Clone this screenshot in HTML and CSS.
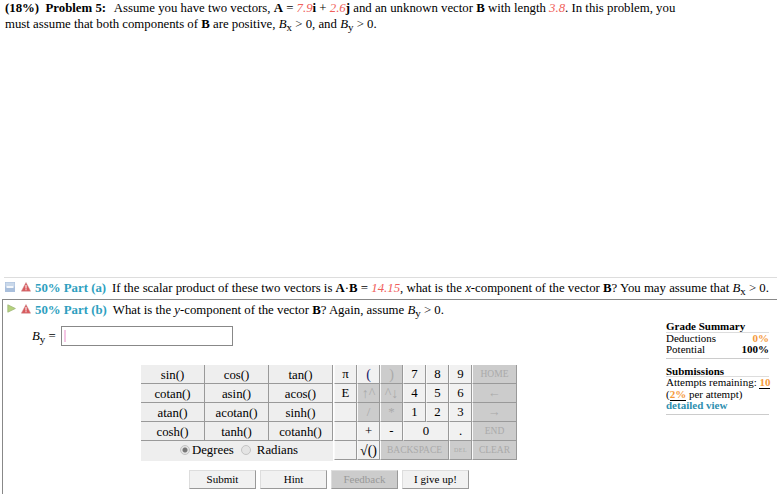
FILE: index.html
```html
<!DOCTYPE html>
<html lang="en">
<head>
<meta charset="utf-8">
<title>Problem 5</title>
<link rel="stylesheet" href="styles.css">
</head>
<body>
<div class="problem">
  <b>(18%)&nbsp; Problem 5:</b><span class="gap">&nbsp; Assume</span> you have two vectors, <b>A</b> = <i class="val">7.9</i><b>i</b> + <i class="val">2.6</i><b>j</b> and an unknown vector <b>B</b> with length <i class="val">3.8</i>. In this problem, you<br>
  must assume that both components of <b>B</b> are positive, <i>B</i><sub>x</sub> &gt; 0, and <i>B</i><sub>y</sub> &gt; 0.
</div>
<div class="part-a">
  <svg class="ic-min" viewBox="0 0 10 10"><rect width="10" height="10" fill="#a9bfdc"/><rect x="0.5" y="0.5" width="9" height="4" fill="#c9d8ea"/><rect x="1.5" y="4" width="7" height="2" fill="#f4f7fb"/></svg>
  <svg class="ic-warn" viewBox="0 0 10 10"><path d="M5 .5 9.6 9.2H.4Z" fill="#d9585c" stroke="#c98a8c" stroke-width=".5"/><rect x="4.5" y="3" width="1" height="3.6" fill="#fff"/><rect x="4.5" y="7.2" width="1" height="1" fill="#fff"/></svg>
  <span class="head">50% Part (a)</span>
  <span class="q">If the scalar product of these two vectors is <b>A</b>·<b>B</b> = <i class="val">14.15</i>, what is the <i>x</i>-component of the vector <b>B</b>? You may assume that <i>B</i><sub>x</sub> &gt; 0.</span>
</div>
<div class="part-b">
  <div class="part-title">
    <svg class="ic-play" viewBox="0 0 9 9"><path d="M.8.8 8.4 4.5.8 8.2Z" fill="#b5d27c" stroke="#9fb77a" stroke-width=".8"/></svg>
    <svg class="ic-warn" viewBox="0 0 10 10"><path d="M5 .5 9.6 9.2H.4Z" fill="#d9585c" stroke="#c98a8c" stroke-width=".5"/><rect x="4.5" y="3" width="1" height="3.6" fill="#fff"/><rect x="4.5" y="7.2" width="1" height="1" fill="#fff"/></svg>
    <span class="head">50% Part (b)</span>
    <span class="q">What is the <i>y</i>-component of the vector <b>B</b>? Again, assume <i>B</i><sub>y</sub> &gt; 0.</span>
  </div>
  <div class="body">
    <div class="work">
      <div class="answer">
        <span class="label"><i>B</i><sub>y</sub> =</span>
        <div class="input"><span class="caret"></span></div>
      </div>
      <div class="keypad">
        <div class="funcs">
          <div class="k">sin()</div><div class="k">cos()</div><div class="k">tan()</div>
          <div class="k">cotan()</div><div class="k">asin()</div><div class="k">acos()</div>
          <div class="k">atan()</div><div class="k">acotan()</div><div class="k">sinh()</div>
          <div class="k">cosh()</div><div class="k">tanh()</div><div class="k">cotanh()</div>
          <div class="angle"><span class="radio on"></span>Degrees<span class="radio off"></span>Radians</div>
        </div>
        <div class="pad">
          <div class="n">π</div><div class="n paren">(</div><div class="n off paren2">)</div><div class="n">7</div><div class="n">8</div><div class="n">9</div><div class="n off sm">HOME</div>
          <div class="n">E</div><div class="n off lg">↑^</div><div class="n off lg">^↓</div><div class="n">4</div><div class="n">5</div><div class="n">6</div><div class="n off">←</div>
          <div class="n"></div><div class="n off">/</div><div class="n off">*</div><div class="n">1</div><div class="n">2</div><div class="n">3</div><div class="n off">→</div>
          <div class="n"></div><div class="n">+</div><div class="n">-</div><div class="n s2">0</div><div class="n">.</div><div class="n off sm">END</div>
          <div class="n"></div><div class="n root">√()</div><div class="n off s3 sm">BACKSPACE</div><div class="n off xs">DEL</div><div class="n off sm">CLEAR</div>
        </div>
      </div>
      <div class="actions">
        <div class="btn">Submit</div><div class="btn">Hint</div><div class="btn dis">Feedback</div><div class="btn">I give up!</div>
      </div>
    </div>
    <aside class="side">
      <div class="side-title">Grade Summary</div>
      <div class="side-box">
        <div class="row"><span>Deductions</span><span class="orange">0%</span></div>
        <div class="row"><span>Potential</span><b>100%</b></div>
      </div>
      <div class="side-title second">Submissions</div>
      <div class="side-box">
        <div>Attempts remaining: <span class="orange ul">10</span></div>
        <div>(<span class="orange ul">2%</span> per attempt)</div>
        <div class="link">detailed view</div>
      </div>
    </aside>
  </div>
</div>
</body>
</html>
```
FILE: styles.css
```css
html, body { margin: 0; padding: 0; background: #fff; }
body { width: 783px; height: 494px; overflow: hidden; font: 12.8px/15px "Liberation Serif", serif; color: #000; }
sub { font-size: 11px; line-height: 0; vertical-align: -3px; }
.val { color: #f0605a; }
.problem { height: 273px; padding: 0 0 0 5px; line-height: 16px; }
.gap { margin-left: 2px; }
.part-a { display: flex; align-items: center; height: 21px; margin: 4px 6px 0 4px; border-top: 1px solid #ddd; white-space: nowrap; }
.part-title { white-space: nowrap; }
.ic-min { width: 10px; height: 10px; margin: -3px 6px 0 1px; flex: none; }
.ic-warn { width: 10px; height: 10px; margin: -3px 4px 0 0; flex: none; }
.ic-play { width: 9px; height: 9px; margin: -3px 5px 0 4px; flex: none; }
.head { color: #2e9fc0; font-weight: bold; margin-right: 6px; }
.part-b { margin: 0 6px 0 2px; height: 195px; border-top: 1px solid #888; border-left: 1px solid #888; }
.part-title { display: flex; align-items: center; height: 20px; }
.body { display: flex; }
.work { width: 663px; }
.answer { display: flex; align-items: center; height: 20px; margin-top: 6px; }
.label { width: 58px; padding-left: 29px; box-sizing: border-box; }
.input { width: 168px; height: 18px; border: 1px solid #888; display: flex; align-items: center; padding-left: 2px; }
.caret { width: 2px; height: 12px; background: #f4c6e4; }
.keypad { display: flex; margin: 19px 0 0 138px; }
.funcs { display: grid; grid-template-columns: repeat(3, 64px); grid-auto-rows: 19px; width: 192px; }
.k { background: #eee; border-right: 1px solid #999; border-bottom: 1px solid #999; display: flex; align-items: center; justify-content: center; box-sizing: border-box; padding-top: 2px; }
.angle { grid-column: 1 / 4; height: 20px; background: #eee; display: flex; align-items: center; justify-content: center; padding: 0 0 2px 4px; box-sizing: border-box; }
.radio { width: 8px; height: 8px; border-radius: 50%; border: 1px solid #c4c4c4; background: #e4e4e4; margin: 0 6px 0 7px; }
.radio.on { background: radial-gradient(circle, #777 0 2px, #e4e4e4 3px); margin: 0 2px 0 0; }
.pad { display: grid; grid-template-columns: repeat(6, 23px) 45px; grid-auto-rows: 19px; margin-left: 1px; }
.n { background: #f1f1f1; border-right: 1px solid #999; border-bottom: 1px solid #999; border-left: 1px solid #fafafa; display: flex; align-items: center; justify-content: center; box-sizing: border-box; padding-top: 1px; }
.n.off { background: #ccc; color: #aaa; }
.sm { font-size: 9.5px; }
.lg { font-size: 14px; }
.xs { font-size: 6px; letter-spacing: .5px; }
.s2 { grid-column: span 2; }
.s3 { grid-column: span 3; }
.paren { color: #1a1a6a; font-size: 14px; }
.paren2 { font-size: 14px; }
.root { font-size: 14px; }
.actions { display: flex; gap: 4px; margin: 10px 0 0 186px; }
.btn { width: 67px; height: 19px; box-sizing: border-box; background: #f1f1f1; border: 1px solid #ddd; border-right-color: #999; border-bottom-color: #999; display: flex; align-items: center; justify-content: center; font-size: 11px; }
.btn.dis { background: #ccc; color: #999; }
.side { width: 103px; font-size: 11px; line-height: 11.5px; white-space: nowrap; }
.side-title { font-weight: bold; padding-top: 1px; }
.second { margin-top: 6px; }
.side-box { border-top: 1px solid #ddd; border-bottom: 1px solid #ccc; padding-bottom: 2px; margin-top: -1px; }
.row { display: flex; justify-content: space-between; }
.orange { color: #f59a3b; font-weight: bold; }
.ul { border-bottom: 1px solid #000; }
.link { color: #2e8fb0; font-weight: bold; }
```
